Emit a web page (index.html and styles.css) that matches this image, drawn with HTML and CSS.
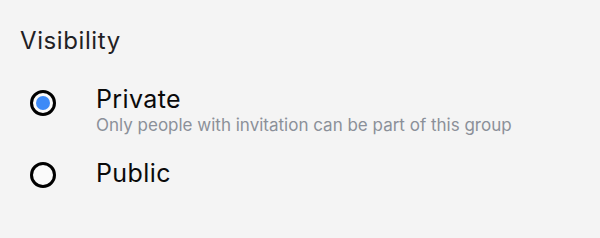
FILE: index.html
```html
<!DOCTYPE html>
<html lang="en">
<head>
    <meta charset="UTF-8">
    <title>Visibility</title>
    <link rel="stylesheet" href="styles.css">
</head>
<body>
    <div class="panel">
        <div class="heading">Visibility</div>

        <div class="options">
            <label class="option">
                <span class="radio checked"><span class="dot"></span></span>
                <span class="option-text">
                    <span class="option-title">Private</span>
                    <span class="option-desc">Only people with invitation can be part of this group</span>
                </span>
            </label>

            <label class="option">
                <span class="radio"></span>
                <span class="option-text">
                    <span class="option-title">Public</span>
                </span>
            </label>
        </div>
    </div>
</body>
</html>
```

FILE: styles.css
```css
body {
    margin: 0;
    background-color: #f4f4f4;
    font-family: Inter, "Noto Sans", sans-serif;
}

.panel {
    padding: 26px 20px 0 20px;
}

.heading {
    font-size: 24px;
    line-height: 30px;
    letter-spacing: 0.6px;
    color: #1f2124;
}

.options {
    display: flex;
    flex-direction: column;
    gap: 22px;
    margin-top: 28px;
}

.option {
    display: flex;
    align-items: flex-start;
    gap: 40px;
    padding-left: 10px;
}

.radio {
    flex: none;
    width: 20px;
    height: 20px;
    border: 3px solid #000;
    border-radius: 50%;
    background: #fafafa;
    display: flex;
    justify-content: center;
    align-items: center;
    margin-top: 4px;
}

.radio.checked {
    margin-top: 6px;
}

.radio .dot {
    width: 14px;
    height: 14px;
    border-radius: 50%;
    background-color: #3d8af7;
}

.option-text {
    display: flex;
    flex-direction: column;
}

.option-title {
    font-size: 25px;
    line-height: 30px;
    letter-spacing: 0.4px;
    color: #0a0a0a;
}

.option-desc {
    font-size: 17px;
    line-height: 22px;
    color: #8b9099;
}
```
